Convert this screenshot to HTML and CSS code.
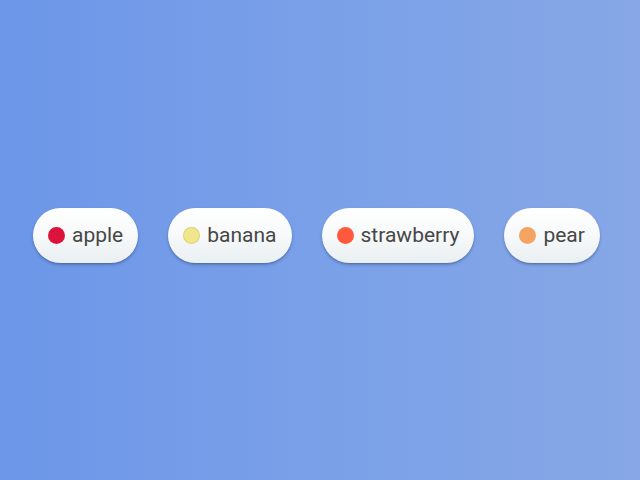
FILE: index.html
```html
<!DOCTYPE html>
<html>
<head>
<meta charset="utf-8">
<link rel="stylesheet" href="styles.css">
</head>
<body>
<div class="row">
  <div class="pill"><span class="dot apple"></span><span class="label">apple</span></div>
  <div class="pill"><span class="dot banana"></span><span class="label">banana</span></div>
  <div class="pill"><span class="dot strawberry"></span><span class="label">strawberry</span></div>
  <div class="pill"><span class="dot pear"></span><span class="label">pear</span></div>
</div>
</body>
</html>
```
FILE: styles.css
```css
html, body {
  margin: 0;
  padding: 0;
  width: 640px;
  height: 480px;
  overflow: hidden;
}
body {
  background: linear-gradient(90deg, #6c96e8 0%, #7ba1e8 55%, #87a7e6 100%);
  font-family: Roboto, "Liberation Sans", sans-serif;
}
.row {
  display: flex;
  align-items: center;
  gap: 30px;
  padding: 208px 0 0 33px;
}
.pill {
  display: flex;
  align-items: center;
  height: 55px;
  box-sizing: border-box;
  padding: 0 15px;
  border-radius: 28px;
  background: linear-gradient(180deg, #ffffff 0%, #f7f9fa 50%, #e9eff1 100%);
  box-shadow: 0 2px 3px rgba(40, 60, 110, 0.35), 0 1px 1px rgba(40, 60, 110, 0.2);
}
.dot {
  width: 17px;
  height: 17px;
  border-radius: 50%;
  margin-right: 7px;
  flex: none;
}
.apple { background: #dc143c; }
.banana { background: #f0e68c; box-shadow: inset 0 0 0 1px rgba(200, 180, 90, 0.4); }
.strawberry { background: #ff5a3d; }
.pear { background: #f4a460; }
.label {
  font-size: 21px;
  color: #474747;
  line-height: 1;
}
```
